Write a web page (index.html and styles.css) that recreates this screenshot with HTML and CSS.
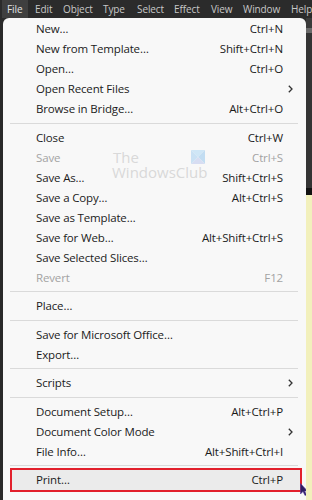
FILE: index.html
```html
<!DOCTYPE html>
<html>
<head>
<meta charset="utf-8">
<link rel="stylesheet" href="styles.css">
</head>
<body>
<div class="screen">
  <div class="menubar">
    <span class="mb-item active">File</span>
    <span class="mb-item">Edit</span>
    <span class="mb-item">Object</span>
    <span class="mb-item">Type</span>
    <span class="mb-item">Select</span>
    <span class="mb-item">Effect</span>
    <span class="mb-item">View</span>
    <span class="mb-item">Window</span>
    <span class="mb-item">Help</span>
  </div>
  <div class="stage">
    <div class="edge-left"></div>
    <div class="menu">
      <div class="item"><span class="label">New…</span><span class="key">Ctrl+N</span><span class="sub"></span></div>
      <div class="item"><span class="label">New from Template…</span><span class="key">Shift+Ctrl+N</span><span class="sub"></span></div>
      <div class="item"><span class="label">Open…</span><span class="key">Ctrl+O</span><span class="sub"></span></div>
      <div class="item"><span class="label">Open Recent Files</span><span class="key"></span><span class="sub"><svg class="chev" viewBox="0 0 5 8" width="5" height="8"><polyline points="0.8,0.8 4,4 0.8,7.2" fill="none" stroke="#333" stroke-width="1.3"/></svg></span></div>
      <div class="item"><span class="label">Browse in Bridge…</span><span class="key">Alt+Ctrl+O</span><span class="sub"></span></div>
      <div class="sep"></div>
      <div class="item"><span class="label">Close</span><span class="key">Ctrl+W</span><span class="sub"></span></div>
      <div class="item disabled"><span class="label">Save</span><span class="key">Ctrl+S</span><span class="sub"></span></div>
      <div class="item"><span class="label">Save As…</span><span class="key">Shift+Ctrl+S</span><span class="sub"></span></div>
      <div class="item"><span class="label">Save a Copy…</span><span class="key">Alt+Ctrl+S</span><span class="sub"></span></div>
      <div class="item"><span class="label">Save as Template…</span><span class="key"></span><span class="sub"></span></div>
      <div class="item"><span class="label">Save for Web…</span><span class="key">Alt+Shift+Ctrl+S</span><span class="sub"></span></div>
      <div class="item"><span class="label">Save Selected Slices…</span><span class="key"></span><span class="sub"></span></div>
      <div class="item disabled"><span class="label">Revert</span><span class="key">F12</span><span class="sub"></span></div>
      <div class="sep"></div>
      <div class="item"><span class="label">Place…</span><span class="key"></span><span class="sub"></span></div>
      <div class="sep"></div>
      <div class="item"><span class="label">Save for Microsoft Office…</span><span class="key"></span><span class="sub"></span></div>
      <div class="item"><span class="label">Export…</span><span class="key"></span><span class="sub"></span></div>
      <div class="sep"></div>
      <div class="item"><span class="label">Scripts</span><span class="key"></span><span class="sub"><svg class="chev" viewBox="0 0 5 8" width="5" height="8"><polyline points="0.8,0.8 4,4 0.8,7.2" fill="none" stroke="#333" stroke-width="1.3"/></svg></span></div>
      <div class="sep"></div>
      <div class="item"><span class="label">Document Setup…</span><span class="key">Alt+Ctrl+P</span><span class="sub"></span></div>
      <div class="item"><span class="label">Document Color Mode</span><span class="key"></span><span class="sub"><svg class="chev" viewBox="0 0 5 8" width="5" height="8"><polyline points="0.8,0.8 4,4 0.8,7.2" fill="none" stroke="#333" stroke-width="1.3"/></svg></span></div>
      <div class="item"><span class="label">File Info…</span><span class="key">Alt+Shift+Ctrl+I</span><span class="sub"></span></div>
      <div class="sep"></div>
      <div class="item print"><span class="label">Print…</span><span class="key">Ctrl+P</span><span class="sub"></span></div>

      <div class="watermark">
        <div class="wm-the">The</div>
        <div class="wm-name">WindowsClub</div>
        <svg class="wm-logo" viewBox="0 0 14 14" width="14" height="14">
          <polygon points="0,0 14,0 7,7" fill="#c9e3f6"/>
          <polygon points="14,0 14,14 7,7" fill="#b9d9f2"/>
          <polygon points="0,14 14,14 7,7" fill="#d2d9f2"/>
          <polygon points="0,0 0,14 7,7" fill="#c2ddf4"/>
        </svg>
      </div>
      <svg class="cursor" viewBox="0 0 8 13" width="8" height="13">
        <polygon points="0.5,0.5 0.5,11 3,8.5 5,12.5 6.5,11.8 4.6,8 7.5,8" fill="#2d1f63" stroke="#5a3ca0" stroke-width="0.6"/>
      </svg>
    </div>
    <div class="edge-right">
      <div class="er-top"></div>
      <div class="er-band"></div>
      <div class="er-dark"></div>
      <div class="er-black"></div>
      <div class="er-yellow"></div>
    </div>
  </div>
</div>
</body>
</html>
```
FILE: styles.css
```css
html, body {
  margin: 0;
  padding: 0;
}
body {
  background: #2b2b2b;
  width: 312px;
  height: 500px;
  overflow: hidden;
}
.screen {
  width: 312px;
  height: 500px;
  display: flex;
  flex-direction: column;
  font-family: "Open Sans", "Noto Sans", sans-serif;
}
.menubar {
  height: 18px;
  display: grid;
  grid-template-columns: 33px 28px 40px 34px 37px 37px 32px 48px 1fr;
  align-items: center;
  background: #2b2b2b;
  color: #c8c8c8;
  font-size: 10px;
  letter-spacing: -0.1px;
  padding-left: 2px;
  white-space: nowrap;
}
.mb-item {
  line-height: 18px;
  justify-self: start;
}
.mb-item.active {
  background: #3f3f3f;
  color: #e4e4e4;
  padding: 0 6px 0 5px;
}
.stage {
  flex: 1;
  display: flex;
  min-height: 0;
}
.edge-left {
  width: 3px;
  background: #2a2a2a;
}
.menu {
  width: 303px;
  position: relative;
  background: #f8f8f8;
  border-radius: 6px 6px 0 0;
  padding-top: 1px;
  color: #1b1b1b;
  font-size: 11.5px;
  letter-spacing: -0.15px;
  overflow: hidden;
}
.item {
  display: grid;
  grid-template-columns: 1fr auto 13px;
  align-items: center;
  height: 20px;
  line-height: 20px;
  padding: 0 10px 0 33px;
  white-space: nowrap;
}
.item.disabled {
  color: #a3a3a3;
}
.key {
  text-align: right;
}
.sub {
  display: flex;
  justify-content: flex-end;
  align-items: center;
  padding-right: 3px;
}
.chev {
  display: block;
}
.sep {
  height: 8.5px;
  display: flex;
  align-items: center;
  margin: 0 8px 0 7px;
}
.sep::before {
  content: "";
  display: block;
  width: 100%;
  height: 1px;
  background: #dadada;
}
.item.print {
  margin: 0 6px 0 9px;
  padding: 0 4px 0 24px;
  background: #ebebeb;
  outline: 2px solid #e2202c;
}
.watermark {
  position: absolute;
  left: 109px;
  top: 132px;
  width: 96px;
  height: 32px;
  color: #d9d9d9;
  font-size: 15px;
  line-height: 15px;
  letter-spacing: 0;
}
.wm-the {
  padding-left: 1px;
}
.wm-logo {
  position: absolute;
  left: 79px;
  top: 0;
  opacity: 0.85;
}
.cursor {
  position: absolute;
  left: 297px;
  top: 465px;
}
.edge-right {
  width: 6px;
  display: flex;
  flex-direction: column;
}
.er-top {
  height: 10px;
  background: #3a3a3a;
}
.er-band {
  height: 5px;
  background: #6a6a6a;
}
.er-dark {
  height: 155px;
  background: #343434;
}
.er-black {
  height: 7px;
  background: #121212;
}
.er-yellow {
  flex: 1;
  background: #f2f0bc;
}
```
